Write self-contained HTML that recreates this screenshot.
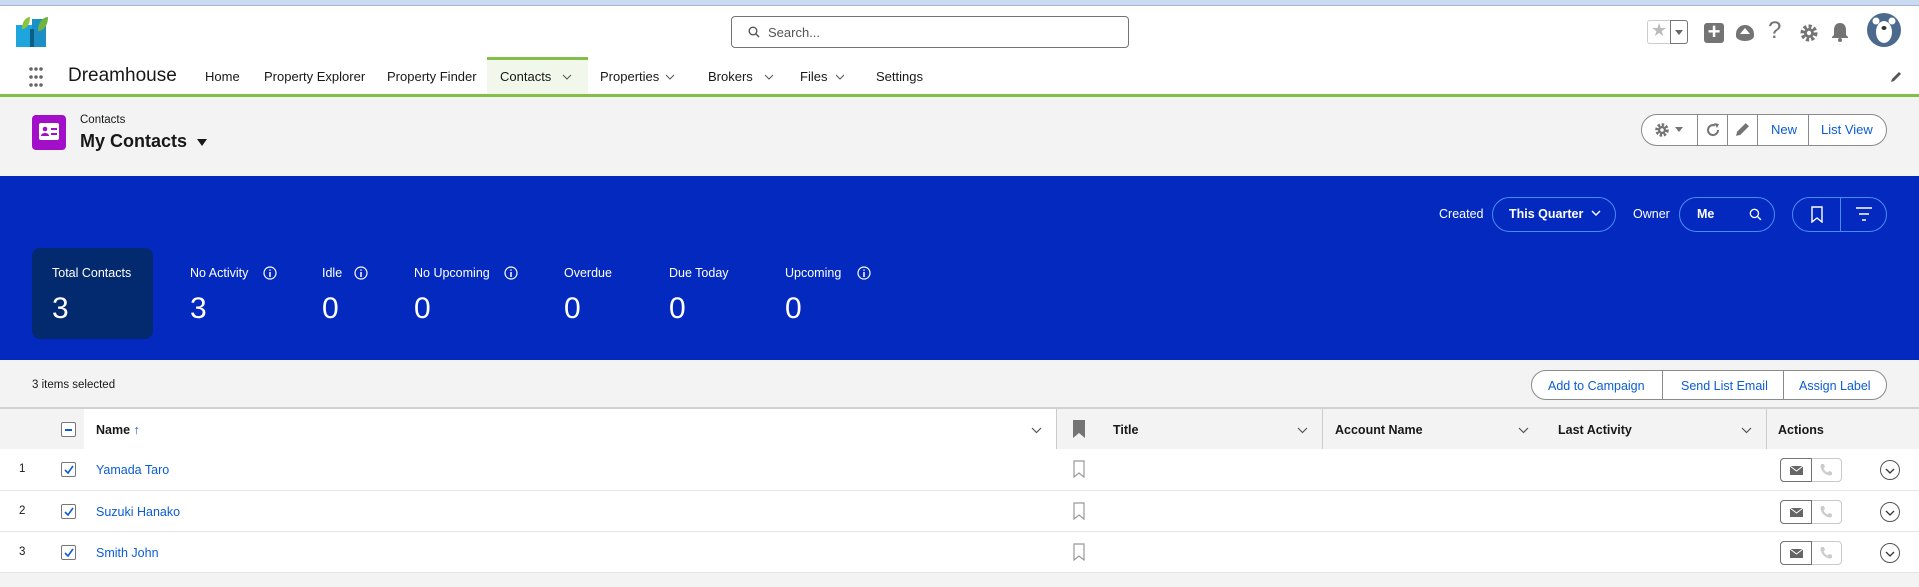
<!DOCTYPE html>
<html><head><meta charset="utf-8"><style>
*{box-sizing:border-box;margin:0;padding:0}
body{width:1919px;height:587px;overflow:hidden;background:#f3f3f3;font-family:"Liberation Sans",Arial,sans-serif;color:#181818;position:relative;font-size:14px}
.a{position:absolute}
.w{color:#fff}
.ic{position:absolute}
</style></head><body>
<div class="a" style="left:0;top:0;width:1919px;height:6px;background:#c9daf2;border-bottom:1px solid #a7b6cf"></div>
<div class="a" style="left:0;top:6px;width:1919px;height:89px;background:#fff"></div>
<svg class="ic" style="left:16px;top:15px" width="40" height="32" viewBox="0 0 40 32"><rect x="0" y="10" width="16" height="22" fill="#1ea6dc"/><rect x="16" y="4" width="14" height="28" fill="#1c8fc6"/><path d="M6 14 C6 4,12 2,14 2 C14 10,10 14,6 14Z" fill="#8cc43f"/><path d="M22 16 C22 6,28 2,32 2 C32 10,28 16,22 16Z" fill="#6eb43f"/><rect x="14" y="14" width="4" height="18" fill="#0b5e84"/></svg>
<div class="a" style="left:731px;top:16px;width:398px;height:32px;border:1px solid #747474;border-radius:4px;background:#fff"></div>
<svg class="ic" style="left:748px;top:26px" width="12" height="12" viewBox="0 0 12 12"><circle cx="5" cy="5" r="3.8" fill="none" stroke="#555" stroke-width="1.4"/><path d="M8 8L11 11" stroke="#555" stroke-width="1.5"/></svg>
<div class="a" style="left:768px;top:25px;font-size:13px;color:#555">Search...</div>
<div class="a" style="left:1647px;top:20px;width:41px;height:24px;border:1px solid #ccc;border-radius:3px;background:#fff"></div>
<div class="a" style="left:1670px;top:20px;width:18px;height:24px;border:1px solid #777;border-radius:0 3px 3px 0"></div>
<div class="a" style="left:1651px;top:20px;font-size:18px;color:#bbb">★</div>
<div class="a" style="left:1675px;top:30px;border:4px solid transparent;border-top:5px solid #666"></div>
<div class="a" style="left:1704px;top:23px;width:20px;height:20px;background:#747474;border-radius:3px"></div>
<div class="a" style="left:1706px;top:19px;font-size:22px;color:#fff;font-weight:bold;width:16px;text-align:center">+</div>
<svg class="ic" style="left:1734px;top:22px" width="22" height="20" viewBox="0 0 22 20"><path d="M2 12 A9 9 0 0 1 20 12 L20 14 A9 5 0 0 1 2 14Z" fill="#747474"/><path d="M6 12 L11 6 L16 12Z" fill="#fff"/></svg>
<div class="a" style="left:1768px;top:17px;font-size:24px;color:#747474">?</div>
<svg class="ic" style="left:1799px;top:23px" width="20" height="20" viewBox="0 0 20 20"><circle cx="10" cy="10" r="6.5" fill="none" stroke="#747474" stroke-width="4" stroke-dasharray="3 2"/><circle cx="10" cy="10" r="5" fill="#747474"/><circle cx="10" cy="10" r="2.2" fill="#fff"/></svg>
<svg class="ic" style="left:1831px;top:22px" width="18" height="20" viewBox="0 0 18 20"><path d="M9 1C5 1 3 4 3 8V13L1 15V16H17V15L15 13V8C15 4 13 1 9 1Z" fill="#747474"/><circle cx="9" cy="18" r="2" fill="#747474"/></svg>
<svg class="ic" style="left:1867px;top:13px" width="34" height="34" viewBox="0 0 34 34"><circle cx="17" cy="17" r="17" fill="#4c6a8e"/><circle cx="9" cy="8" r="3.5" fill="#fff"/><circle cx="25" cy="8" r="3.5" fill="#fff"/><ellipse cx="17" cy="19" rx="8" ry="11" fill="#fff"/><ellipse cx="17" cy="15" rx="2.5" ry="2" fill="#333"/></svg>
<svg class="ic" style="left:29px;top:66px" width="14" height="22" viewBox="0 0 14 22"><g fill="#666"><circle cx="2" cy="3" r="1.8"/><circle cx="7" cy="3" r="1.8"/><circle cx="12" cy="3" r="1.8"/><circle cx="2" cy="11" r="1.8"/><circle cx="7" cy="11" r="1.8"/><circle cx="12" cy="11" r="1.8"/><circle cx="2" cy="19" r="1.8"/><circle cx="7" cy="19" r="1.8"/><circle cx="12" cy="19" r="1.8"/></g></svg>
<div class="a" style="left:68px;top:65px;font-size:19px;color:#181818">Dreamhouse</div>
<div class="a" style="left:487px;top:57px;width:101px;height:38px;background:#f2f7ec;border-top:3px solid #84bd47"></div>
<div class="a" style="left:205px;top:69px;font-size:13px;white-space:nowrap">Home</div>
<div class="a" style="left:264px;top:69px;font-size:13px;white-space:nowrap">Property Explorer</div>
<div class="a" style="left:387px;top:69px;font-size:13px;white-space:nowrap">Property Finder</div>
<div class="a" style="left:500px;top:69px;font-size:13px;white-space:nowrap">Contacts</div>
<div class="a" style="left:600px;top:69px;font-size:13px;white-space:nowrap">Properties</div>
<div class="a" style="left:708px;top:69px;font-size:13px;white-space:nowrap">Brokers</div>
<div class="a" style="left:800px;top:69px;font-size:13px;white-space:nowrap">Files</div>
<div class="a" style="left:876px;top:69px;font-size:13px;white-space:nowrap">Settings</div>
<svg class="ic" style="left:562px;top:74px" width="10" height="6"><path d="M1 1L5 5L9 1" stroke="#555" fill="none"/></svg>
<svg class="ic" style="left:665px;top:74px" width="10" height="6"><path d="M1 1L5 5L9 1" stroke="#555" fill="none"/></svg>
<svg class="ic" style="left:764px;top:74px" width="10" height="6"><path d="M1 1L5 5L9 1" stroke="#555" fill="none"/></svg>
<svg class="ic" style="left:835px;top:74px" width="10" height="6"><path d="M1 1L5 5L9 1" stroke="#555" fill="none"/></svg>
<svg class="ic" style="left:1889px;top:70px" width="14" height="14" viewBox="0 0 14 14"><path d="M2 12L3 9L10 2L12 4L5 11Z" fill="#555"/></svg>
<div class="a" style="left:0;top:94px;width:1919px;height:3px;background:#84bd47"></div>
<div class="a" style="left:32px;top:115px;width:34px;height:35px;background:#a30ec9;border-radius:4px"></div>
<svg class="ic" style="left:39px;top:123px" width="20" height="17" viewBox="0 0 20 17"><rect x="0" y="0" width="20" height="17" rx="2" fill="#fff"/><circle cx="6" cy="6" r="2.3" fill="#a30ec9"/><path d="M2 13C2 9 10 9 10 13Z" fill="#a30ec9"/><rect x="12" y="5" width="6" height="2" fill="#a30ec9"/><rect x="12" y="10" width="6" height="2" fill="#a30ec9"/></svg>
<div class="a" style="left:80px;top:114px;font-size:11.5px">Contacts</div>
<div class="a" style="left:80px;top:131px;font-size:18px;font-weight:bold">My Contacts</div>
<div class="a" style="left:197px;top:139px;border:5px solid transparent;border-top:7px solid #181818"></div>
<div class="a" style="left:1641px;top:114px;width:246px;height:32px;border:1px solid #8a8a8a;border-radius:16px;background:#fff"></div>
<div class="a" style="left:1697px;top:114px;width:1px;height:32px;background:#8a8a8a"></div>
<div class="a" style="left:1727px;top:114px;width:1px;height:32px;background:#8a8a8a"></div>
<div class="a" style="left:1757px;top:114px;width:1px;height:32px;background:#8a8a8a"></div>
<div class="a" style="left:1808px;top:114px;width:1px;height:32px;background:#8a8a8a"></div>
<svg class="ic" style="left:1654px;top:122px" width="16" height="16" viewBox="0 0 20 20"><circle cx="10" cy="10" r="6.5" fill="none" stroke="#747474" stroke-width="4" stroke-dasharray="3 2"/><circle cx="10" cy="10" r="5" fill="#747474"/><circle cx="10" cy="10" r="2.2" fill="#fff"/></svg>
<div class="a" style="left:1675px;top:127px;border:4px solid transparent;border-top:5px solid #747474"></div>
<svg class="ic" style="left:1705px;top:122px" width="16" height="16" viewBox="0 0 16 16"><path d="M13 8A5 5 0 1 1 10 3.5" stroke="#747474" stroke-width="2" fill="none"/><path d="M9 1L14 2L12 6Z" fill="#747474"/></svg>
<svg class="ic" style="left:1735px;top:122px" width="15" height="15" viewBox="0 0 14 14"><path d="M1 13L2 9L10 1L13 4L5 12Z" fill="#747474"/></svg>
<div class="a" style="left:1771px;top:122px;font-size:13px;color:#0b5cd5">New</div>
<div class="a" style="left:1821px;top:122px;font-size:13px;color:#0b5cd5">List View</div>
<div class="a" style="left:0;top:176px;width:1919px;height:184px;background:#0429bf"></div>
<div class="a w" style="left:1439px;top:207px;font-size:12.5px">Created</div>
<div class="a" style="left:1492px;top:197px;width:124px;height:35px;border:1px solid #4a8cf7;border-radius:18px"></div>
<div class="a w" style="left:1509px;top:207px;font-size:12.5px;font-weight:bold">This Quarter</div>
<svg class="ic" style="left:1591px;top:210px" width="10" height="7"><path d="M1 1L5 5L9 1" stroke="#fff" stroke-width="1.4" fill="none"/></svg>
<div class="a w" style="left:1633px;top:207px;font-size:12.5px">Owner</div>
<div class="a" style="left:1679px;top:197px;width:96px;height:35px;border:1px solid #4a8cf7;border-radius:18px"></div>
<div class="a w" style="left:1697px;top:207px;font-size:12.5px;font-weight:bold">Me</div>
<svg class="ic" style="left:1749px;top:208px" width="13" height="13" viewBox="0 0 12 12"><circle cx="5" cy="5" r="3.8" fill="none" stroke="#fff" stroke-width="1.2"/><path d="M8 8L11 11" stroke="#fff" stroke-width="1.3"/></svg>
<div class="a" style="left:1792px;top:197px;width:95px;height:35px;border:1px solid #4a8cf7;border-radius:18px"></div>
<div class="a" style="left:1840px;top:197px;width:1px;height:35px;background:#4a8cf7"></div>
<svg class="ic" style="left:1811px;top:206px" width="12" height="17" viewBox="0 0 12 17"><path d="M1 1H11V16L6 12L1 16Z" stroke="#fff" stroke-width="1.4" fill="none"/></svg>
<svg class="ic" style="left:1855px;top:207px" width="18" height="14"><path d="M1 1H17M4 7H14M7 13H11" stroke="#fff" stroke-width="1.4"/></svg>
<div class="a" style="left:32px;top:248px;width:121px;height:91px;background:#032a6e;border-radius:8px"></div>
<div class="a w" style="left:52px;top:266px;font-size:12.5px">Total Contacts</div>
<div class="a w" style="left:52px;top:292px;font-size:30px">3</div>
<div class="a w" style="left:190px;top:266px;font-size:12.5px">No Activity</div>
<div class="a w" style="left:190px;top:292px;font-size:30px">3</div>
<div class="a w" style="left:322px;top:266px;font-size:12.5px">Idle</div>
<div class="a w" style="left:322px;top:292px;font-size:30px">0</div>
<div class="a w" style="left:414px;top:266px;font-size:12.5px">No Upcoming</div>
<div class="a w" style="left:414px;top:292px;font-size:30px">0</div>
<div class="a w" style="left:564px;top:266px;font-size:12.5px">Overdue</div>
<div class="a w" style="left:564px;top:292px;font-size:30px">0</div>
<div class="a w" style="left:669px;top:266px;font-size:12.5px">Due Today</div>
<div class="a w" style="left:669px;top:292px;font-size:30px">0</div>
<div class="a w" style="left:785px;top:266px;font-size:12.5px">Upcoming</div>
<div class="a w" style="left:785px;top:292px;font-size:30px">0</div>
<svg class="ic" style="left:263px;top:266px" width="14" height="14"><circle cx="7" cy="7" r="6" stroke="#fff" stroke-width="1.2" fill="none"/><path d="M7 6V11M7 3.5V4.8" stroke="#fff" stroke-width="1.5"/></svg>
<svg class="ic" style="left:354px;top:266px" width="14" height="14"><circle cx="7" cy="7" r="6" stroke="#fff" stroke-width="1.2" fill="none"/><path d="M7 6V11M7 3.5V4.8" stroke="#fff" stroke-width="1.5"/></svg>
<svg class="ic" style="left:504px;top:266px" width="14" height="14"><circle cx="7" cy="7" r="6" stroke="#fff" stroke-width="1.2" fill="none"/><path d="M7 6V11M7 3.5V4.8" stroke="#fff" stroke-width="1.5"/></svg>
<svg class="ic" style="left:857px;top:266px" width="14" height="14"><circle cx="7" cy="7" r="6" stroke="#fff" stroke-width="1.2" fill="none"/><path d="M7 6V11M7 3.5V4.8" stroke="#fff" stroke-width="1.5"/></svg>
<div class="a" style="left:32px;top:379px;font-size:11.5px">3 items selected</div>
<div class="a" style="left:1531px;top:370px;width:356px;height:30px;border:1px solid #8a8a8a;border-radius:15px;background:#fff"></div>
<div class="a" style="left:1662px;top:370px;width:1px;height:30px;background:#8a8a8a"></div>
<div class="a" style="left:1783px;top:370px;width:1px;height:30px;background:#8a8a8a"></div>
<div class="a" style="left:1548px;top:379px;font-size:12.5px;color:#0b5cd5">Add to Campaign</div>
<div class="a" style="left:1681px;top:379px;font-size:12.5px;color:#0b5cd5">Send List Email</div>
<div class="a" style="left:1799px;top:379px;font-size:12.5px;color:#0b5cd5">Assign Label</div>
<div class="a" style="left:0;top:407px;width:1919px;height:2px;background:#d0d0d0"></div>
<div class="a" style="left:0;top:409px;width:1919px;height:40px;background:#f3f3f3"></div>
<div class="a" style="left:84px;top:409px;width:972px;height:40px;background:#fff"></div>
<div class="a" style="left:1056px;top:409px;width:1px;height:40px;background:#ccc"></div>
<div class="a" style="left:1322px;top:409px;width:1px;height:40px;background:#ccc"></div>
<div class="a" style="left:1766px;top:409px;width:1px;height:40px;background:#ccc"></div>
<div class="a" style="left:61px;top:422px;width:15px;height:15px;border:1px solid #777;border-radius:2px;background:#fff"></div>
<div class="a" style="left:65px;top:429px;width:7px;height:2px;background:#0b5cd5"></div>
<div class="a" style="left:96px;top:423px;font-size:12.5px;font-weight:bold">Name <span style="color:#0b5cd5">↑</span></div>
<div class="a" style="left:1113px;top:423px;font-size:12.5px;font-weight:bold">Title</div>
<div class="a" style="left:1335px;top:423px;font-size:12.5px;font-weight:bold">Account Name</div>
<div class="a" style="left:1558px;top:423px;font-size:12.5px;font-weight:bold">Last Activity</div>
<div class="a" style="left:1778px;top:423px;font-size:12.5px;font-weight:bold">Actions</div>
<svg class="ic" style="left:1031px;top:427px" width="11" height="7"><path d="M1 1L5.5 5.5L10 1" stroke="#555" stroke-width="1.2" fill="none"/></svg>
<svg class="ic" style="left:1297px;top:427px" width="11" height="7"><path d="M1 1L5.5 5.5L10 1" stroke="#555" stroke-width="1.2" fill="none"/></svg>
<svg class="ic" style="left:1518px;top:427px" width="11" height="7"><path d="M1 1L5.5 5.5L10 1" stroke="#555" stroke-width="1.2" fill="none"/></svg>
<svg class="ic" style="left:1741px;top:427px" width="11" height="7"><path d="M1 1L5.5 5.5L10 1" stroke="#555" stroke-width="1.2" fill="none"/></svg>
<svg class="ic" style="left:1073px;top:420px" width="12" height="18"><path d="M0 0H12V18L6 13L0 18Z" fill="#747474"/></svg>
<div class="a" style="left:0;top:449px;width:1919px;height:124px;background:#fff"></div>
<div class="a" style="left:0;top:490px;width:1919px;height:1px;background:#e5e5e5"></div>
<div class="a" style="left:0;top:531px;width:1919px;height:1px;background:#e5e5e5"></div>
<div class="a" style="left:0;top:572px;width:1919px;height:1px;background:#e5e5e5"></div>
<div id="rows"></div>
<script>
var names=["Yamada Taro","Suzuki Hanako","Smith John"],h="";
for(var i=0;i<3;i++){var y=449+i*41.5;
h+='<div class="a" style="left:19px;top:'+(y+14)+'px;font-size:11.5px">'+(i+1)+'</div>';
h+='<div class="a" style="left:61px;top:'+(y+13)+'px;width:15px;height:15px;border:1px solid #777;border-radius:2px;background:#fff"></div>';
h+='<svg class="ic" style="left:64px;top:'+(y+16)+'px" width="10" height="9"><path d="M1 5L4 8L9 1" stroke="#0b5cd5" stroke-width="1.6" fill="none"/></svg>';
h+='<div class="a" style="left:96px;top:'+(y+14)+'px;font-size:12.5px;color:#0b5cd5">'+names[i]+'</div>';
h+='<svg class="ic" style="left:1073px;top:'+(y+11)+'px" width="12" height="18"><path d="M1 1H11V17L6 13L1 17Z" fill="none" stroke="#999" stroke-width="1.2"/></svg>';
h+='<div class="a" style="left:1780px;top:'+(y+9)+'px;width:62px;height:24px;border:1px solid #c9c9c9;border-radius:4px;background:#fff"></div>';
h+='<div class="a" style="left:1780px;top:'+(y+9)+'px;width:32px;height:24px;border:1px solid #747474;border-radius:4px 0 0 4px"></div>';
h+='<svg class="ic" style="left:1790px;top:'+(y+17)+'px" width="13" height="9"><rect width="13" height="9" fill="#666"/><path d="M0 0L6.5 5L13 0" stroke="#fff" fill="none"/></svg>';
h+='<svg class="ic" style="left:1820px;top:'+(y+14)+'px" width="12" height="13" viewBox="0 0 12 13"><path d="M2 1L4 1L5 4L3.5 5.5C4.5 7.5 5.5 8.5 7.5 9.5L9 8L12 9V11C12 12 11 12.5 10 12.5C5 12 1 8 0.5 3C0.5 2 1 1 2 1Z" fill="#ccc"/></svg>';
h+='<div class="a" style="left:1880px;top:'+(y+11)+'px;width:20px;height:20px;border:1px solid #555;border-radius:50%;background:#fff"></div>';
h+='<svg class="ic" style="left:1885px;top:'+(y+19)+'px" width="10" height="6"><path d="M1 1L5 5L9 1" stroke="#333" stroke-width="1.3" fill="none"/></svg>';}
document.getElementById("rows").innerHTML=h;
</script>
</body></html>
